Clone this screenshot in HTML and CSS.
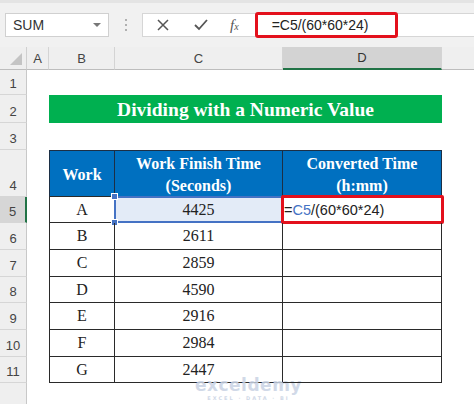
FILE: index.html
```html
<!DOCTYPE html>
<html>
  <head>
    <title>Dividing with a Numeric Value</title>
    <link rel="stylesheet" href="styles.css">
  </head>
  <body>
    <div class="toolbar">
      <div class="name-box">
        <span>SUM</span>
        <span class="drop"></span>
      </div>
      <div class="grip"><i></i><i></i><i></i></div>
      <div class="formula-bar">
        <svg class="ico" width="14" height="14" viewBox="0 0 14 14"><path d="M2 2 L12 12 M12 2 L2 12" stroke="#555" stroke-width="1.5" fill="none"/></svg>
        <svg class="ico" width="16" height="14" viewBox="0 0 16 14"><path d="M2 7 L6 11 L14 2" stroke="#555" stroke-width="1.8" fill="none"/></svg>
        <span class="fx">f<small>x</small></span>
        <div class="formula">=C5/(60*60*24)</div>
      </div>
    </div>

    <div class="sheet">
      <div class="corner"><span></span></div>
      <div class="ch">A</div>
      <div class="ch">B</div>
      <div class="ch">C</div>
      <div class="ch active">D</div>
      <div class="ch last"></div>

      <div class="rh r1">1</div>
      <div class="rh r2">2</div>
      <div class="rh r3">3</div>
      <div class="rh r4">4</div>
      <div class="rh r5 active">5</div>
      <div class="rh r6">6</div>
      <div class="rh r7">7</div>
      <div class="rh r8">8</div>
      <div class="rh r9">9</div>
      <div class="rh r10">10</div>
      <div class="rh r11">11</div>
      <div class="rh r12"></div>

      <div class="title">Dividing with a Numeric Value</div>

      <div class="cell head cb r4">Work</div>
      <div class="cell head cc r4">Work Finish Time<br>(Seconds)</div>
      <div class="cell head cd r4">Converted Time<br>(h:mm)</div>

      <div class="cell cb r5">A</div>
      <div class="cell cc r5 selected">4425<span class="sel"><i class="h tl"></i><i class="h bl"></i></span></div>
      <div class="cell cd r5 editing"><span>=</span><span class="ref">C5</span>/(60*60*24)<span class="red"></span></div>

      <div class="cell cb r6">B</div>
      <div class="cell cc r6">2611</div>
      <div class="cell cd r6"></div>

      <div class="cell cb r7">C</div>
      <div class="cell cc r7">2859</div>
      <div class="cell cd r7"></div>

      <div class="cell cb r8">D</div>
      <div class="cell cc r8">4590</div>
      <div class="cell cd r8"></div>

      <div class="cell cb r9">E</div>
      <div class="cell cc r9">2916</div>
      <div class="cell cd r9"></div>

      <div class="cell cb r10">F</div>
      <div class="cell cc r10">2984</div>
      <div class="cell cd r10"></div>

      <div class="cell cb r11">G</div>
      <div class="cell cc r11">2447<span class="mark">exceldemy<small>EXCEL · DATA · BI</small></span></div>
      <div class="cell cd r11"></div>
    </div>
  </body>
</html>
```

FILE: styles.css
```css
html, body {
  margin:0px;
  padding:0px;
  background:#fff;
  width:474px;
  height:404px;
  overflow:hidden;
}
body {
  font-family:"Liberation Sans", Arial, sans-serif;
  color:#222;
}

/* formula toolbar */
.toolbar {
  height:47px;
  background:#f1f1f1;
  border-top:3px solid #e4e4e4;
  box-sizing:border-box;
  display:flex;
  align-items:flex-start;
  padding-top:10px;
  padding-left:5px;
}
.name-box {
  width:104px;
  height:24px;
  box-sizing:border-box;
  background:#fff;
  border:1px solid #d0d0d0;
  display:flex;
  align-items:center;
  justify-content:space-between;
  padding:0px 7px 0px 7px;
  font-size:14px;
  color:#333;
}
.name-box .drop {
  width:0px;
  height:0px;
  border-left:4px solid transparent;
  border-right:4px solid transparent;
  border-top:4px solid #777;
}
.grip {
  width:33px;
  height:24px;
  display:flex;
  flex-direction:column;
  align-items:center;
  justify-content:center;
  gap:3px;
}
.grip i {
  width:2px;
  height:2px;
  background:#b0b0b0;
}
.formula-bar {
  flex:1;
  height:24px;
  background:#fff;
  border:1px solid #d6d6d6;
  border-right:0px;
  box-sizing:border-box;
  display:flex;
  align-items:center;
}
.formula-bar .ico:nth-child(1) { margin-left:13px; }
.formula-bar .ico:nth-child(2) { margin-left:23px; }
.fx {
  margin-left:21px;
  font-family:"Liberation Serif", serif;
  font-style:italic;
  font-size:15px;
  color:#555;
}
.fx small { font-size:10px; }
.formula {
  margin-left:16px;
  height:26px;
  width:143px;
  box-sizing:border-box;
  border:3px solid #e3101c;
  border-radius:3px;
  font-size:14px;
  color:#222;
  padding-left:14px;
  line-height:20px;
}

/* worksheet grid */
.sheet {
  display:grid;
  grid-template-columns:27px 22px 66px 168px 159px 1fr;
  grid-template-rows:23px 25px 28px 27px 47px 26px 27px 27px 26px 27px 27px 26px 1fr;
  height:357px;
}
.corner {
  background:#efefef;
  border-right:1px solid #d0d0d0;
  border-bottom:1px solid #bdbdbd;
  position:relative;
}
.corner span {
  position:absolute;
  right:4px;
  bottom:4px;
  width:0px;
  height:0px;
  border-left:12px solid transparent;
  border-bottom:12px solid #c4c4c4;
}
.ch {
  background:#efefef;
  border-right:1px solid #d4d4d4;
  border-bottom:1px solid #bdbdbd;
  display:flex;
  align-items:center;
  justify-content:center;
  font-size:13px;
  color:#444;
}
.ch.active {
  background:#d3d3d3;
  border-bottom:2px solid #217346;
  color:#333;
}
.ch.last { border-right:0px; }
.rh {
  grid-column:1;
  background:#efefef;
  border-right:1px solid #c8c8c8;
  border-bottom:1px solid #d6d6d6;
  display:flex;
  align-items:flex-end;
  justify-content:center;
  padding-bottom:3px;
  box-sizing:border-box;
  font-size:13px;
  color:#444;
}
.rh.active {
  background:#d6d6d6;
  border-right:2px solid #217346;
}
.r1 { grid-row:2; }
.r2 { grid-row:3; }
.r3 { grid-row:4; }
.r4 { grid-row:5; }
.r5 { grid-row:6; }
.r6 { grid-row:7; }
.r7 { grid-row:8; }
.r8 { grid-row:9; }
.r9 { grid-row:10; }
.r10 { grid-row:11; }
.r11 { grid-row:12; }
.r12 { grid-row:13; border-bottom:0px; }
.cb { grid-column:3; }
.cc { grid-column:4; }
.cd { grid-column:5; }

.title {
  grid-column:3 / 6;
  grid-row:3;
  background:#00b050;
  color:#fff;
  font-family:"Liberation Serif", serif;
  font-weight:bold;
  font-size:19.5px;
  display:flex;
  align-items:center;
  justify-content:center;
  padding-top:1px;
}

.cell {
  border-right:1px solid #2a2a2a;
  border-bottom:1px solid #2a2a2a;
  display:flex;
  align-items:center;
  justify-content:center;
  font-family:"Liberation Serif", serif;
  font-size:16px;
  color:#222;
  position:relative;
}
.cell.cb {
  border-left:1px solid #2a2a2a;
}
.cell.head {
  background:#0070c0;
  color:#fff;
  font-weight:bold;
  text-align:center;
  line-height:22px;
  border-top:1px solid #1c2f45;
  border-right-color:#1c2f45;
  padding-top:2px;
}
.cell.head.cb { border-left-color:#1c2f45; }
.cell.selected { background:#e3ebf7; }
.sel {
  position:absolute;
  left:-1px;
  top:-1px;
  right:-1px;
  bottom:-1px;
  border:2px solid #4472c4;
}
.sel .h {
  position:absolute;
  width:5px;
  height:5px;
  background:#4472c4;
  border:1px solid #fff;
}
.sel .tl { left:-5px; top:-5px; }
.sel .bl { left:-5px; bottom:-5px; }
.cell.editing {
  justify-content:flex-start;
  font-family:"Liberation Sans", Arial, sans-serif;
  font-size:14.5px;
  padding-left:1px;
}
.editing .ref { color:#4472c4; }
.red {
  position:absolute;
  left:-2px;
  top:-2px;
  right:-3px;
  bottom:-2px;
  border:3px solid #e3101c;
  border-radius:2px;
}
.mark {
  position:absolute;
  left:80px;
  top:19px;
  font-family:"DejaVu Sans", sans-serif;
  font-weight:bold;
  font-size:17px;
  color:#c9d3e4;
  letter-spacing:0.5px;
  line-height:19px;
  text-align:center;
  opacity:0.85;
}
.mark small {
  display:block;
  font-size:5px;
  letter-spacing:2px;
  line-height:6px;
}
```
